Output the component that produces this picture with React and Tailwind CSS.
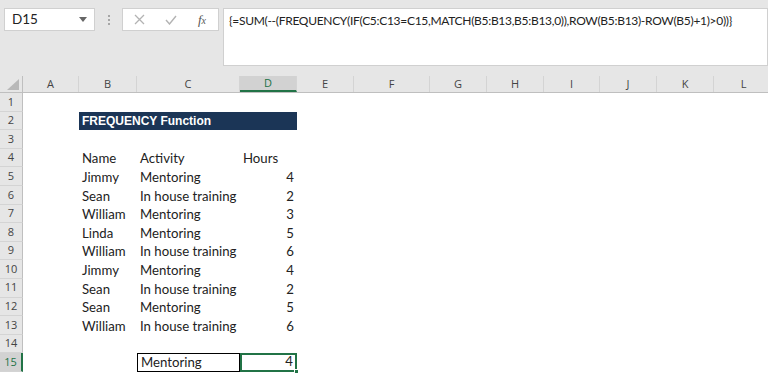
import React from "react";

const COLS = [
  { key: "A", w: "w-[56px]" },
  { key: "B", w: "w-[58px]" },
  { key: "C", w: "w-[103px]" },
  { key: "D", w: "w-[57px]" },
  { key: "E", w: "w-[57px]" },
  { key: "F", w: "w-[76px]" },
  { key: "G", w: "w-[57px]" },
  { key: "H", w: "w-[57px]" },
  { key: "I", w: "w-[56px]" },
  { key: "J", w: "w-[57px]" },
  { key: "K", w: "w-[57px]" },
  { key: "L", w: "w-[60px]" },
];

const DATA = [
  ["Jimmy", "Mentoring", 4],
  ["Sean", "In house training", 2],
  ["William", "Mentoring", 3],
  ["Linda", "Mentoring", 5],
  ["William", "In house training", 6],
  ["Jimmy", "Mentoring", 4],
  ["Sean", "In house training", 2],
  ["Sean", "Mentoring", 5],
  ["William", "In house training", 6],
];

const FORMULA =
  "{=SUM(--(FREQUENCY(IF(C5:C13=C15,MATCH(B5:B13,B5:B13,0)),ROW(B5:B13)-ROW(B5)+1)>0))}";

function RowHeader({ n, active }) {
  return (
    <div
      className={
        "w-[23px] shrink-0 flex items-center justify-center text-[11px] border-b border-[#d4d4d4] " +
        (active
          ? "bg-[#d2d2d2] text-[#217346] border-r-2 border-r-[#217346]"
          : "bg-[#e6e6e6] text-[#444] border-r border-r-[#bfbfbf]")
      }
      style={{ fontFamily: '"Open Sans", sans-serif' }}
    >
      {n}
    </div>
  );
}

function Cell({ w, className = "", children }) {
  return (
    <div className={w + " shrink-0 flex items-end px-[3px] whitespace-nowrap leading-[17px] " + className}>
      {children}
    </div>
  );
}

function Row({ n, cells = {}, active }) {
  return (
    <div className="flex h-[18.6px]">
      <RowHeader n={n} active={active} />
      {COLS.map((c) => {
        const cell = cells[c.key];
        if (!cell) return <Cell key={c.key} w={c.w} />;
        return (
          <Cell key={c.key} w={c.w} className={cell.className || ""}>
            {cell.text}
          </Cell>
        );
      })}
    </div>
  );
}

export default function App() {
  return (
    <div
      className="w-[768px] h-[374px] overflow-hidden bg-white text-[#222]"
      style={{ fontFamily: 'Lato, "Liberation Sans", sans-serif' }}
    >
      {/* formula bar area */}
      <div className="h-[76px] bg-[#e6e6e6] flex items-start pt-[8px] pl-[4px]">
        <div className="w-[91px] h-[23px] shrink-0 bg-white border border-[#d0d0d0] flex items-center justify-between pl-[7px] pr-[7px] text-[13.5px]">
          <span>D15</span>
          <svg width="8" height="5" viewBox="0 0 8 5">
            <path d="M0 0 L8 0 L4 5 Z" fill="#666" />
          </svg>
        </div>
        <div className="w-[27px] h-[23px] shrink-0 flex flex-col items-center justify-center gap-[2px]">
          <span className="w-[2px] h-[2px] bg-[#a6a6a6]" />
          <span className="w-[2px] h-[2px] bg-[#a6a6a6]" />
          <span className="w-[2px] h-[2px] bg-[#a6a6a6]" />
        </div>
        <div className="w-[97px] h-[23px] shrink-0 bg-white border border-[#d0d0d0] flex items-center">
          <div className="w-[32px] flex justify-center">
            <svg width="11" height="11" viewBox="0 0 11 11">
              <path d="M1 1 L10 10 M10 1 L1 10" stroke="#b3b3b3" strokeWidth="1.3" />
            </svg>
          </div>
          <div className="w-[32px] flex justify-center">
            <svg width="12" height="10" viewBox="0 0 12 10">
              <path d="M1 5 L4.5 9 L11 1" stroke="#b3b3b3" strokeWidth="1.4" fill="none" />
            </svg>
          </div>
          <div className="w-[30px] flex justify-center">
            <span
              className="italic text-[13px] text-[#555] leading-none"
              style={{ fontFamily: '"Liberation Serif", serif' }}
            >
              f<span className="text-[10px]">x</span>
            </span>
          </div>
        </div>
        <div className="ml-[4px] flex-1 min-w-0 overflow-hidden h-[58px] bg-white border border-[#d0d0d0] pl-[5px] pt-[3px] text-[12px] tracking-[-0.3px] whitespace-nowrap">
          {FORMULA}
        </div>
      </div>

      {/* column headers */}
      <div
        className="flex h-[17px] bg-[#e6e6e6] border-b border-[#bfbfbf]"
        style={{ fontFamily: '"Open Sans", sans-serif' }}
      >
        <div className="w-[23px] shrink-0 relative border-r border-[#bfbfbf]">
          <svg className="absolute right-[3px] bottom-[2px]" width="12" height="11" viewBox="0 0 12 11">
            <path d="M12 0 L12 11 L0 11 Z" fill="#b8b8b8" />
          </svg>
        </div>
        {COLS.map((c) => (
          <div
            key={c.key}
            className={
              c.w +
              " shrink-0 flex items-center justify-center text-[11px] border-r border-[#d4d4d4] " +
              (c.key === "D"
                ? "bg-[#d2d2d2] text-[#217346] border-b-2 border-b-[#217346]"
                : "text-[#444]")
            }
          >
            {c.key}
          </div>
        ))}
      </div>

      {/* sheet body */}
      <div className="text-[13.2px]">
        <Row n={1} />
        <div className="flex h-[18.6px]">
          <RowHeader n={2} />
          <Cell w="w-[56px]" />
          <div
            className="w-[218px] shrink-0 bg-[#1b3556] text-white font-bold text-[12px] flex items-center px-[3px]"
            style={{ fontFamily: '"Liberation Sans", sans-serif' }}
          >
            FREQUENCY Function
          </div>
        </div>
        <Row n={3} />
        <Row
          n={4}
          cells={{
            B: { text: "Name" },
            C: { text: "Activity" },
            D: { text: "Hours" },
          }}
        />
        {DATA.map((d, i) => (
          <Row
            key={i}
            n={i + 5}
            cells={{
              B: { text: d[0] },
              C: { text: d[1] },
              D: { text: d[2], className: "justify-end" },
            }}
          />
        ))}
        <Row n={14} />
        <div className="flex h-[18.6px]">
          <RowHeader n={15} active />
          <Cell w="w-[56px]" />
          <Cell w="w-[58px]" />
          <Cell w="w-[103px]" className="border border-black">
            Mentoring
          </Cell>
          <div className="w-[57px] shrink-0 relative border-2 border-[#217346] flex items-end justify-end px-[2px] leading-[17px]">
            4
            <span className="absolute -right-[4px] -bottom-[4px] w-[5px] h-[5px] bg-[#217346] border border-white" />
          </div>
        </div>
      </div>
    </div>
  );
}
